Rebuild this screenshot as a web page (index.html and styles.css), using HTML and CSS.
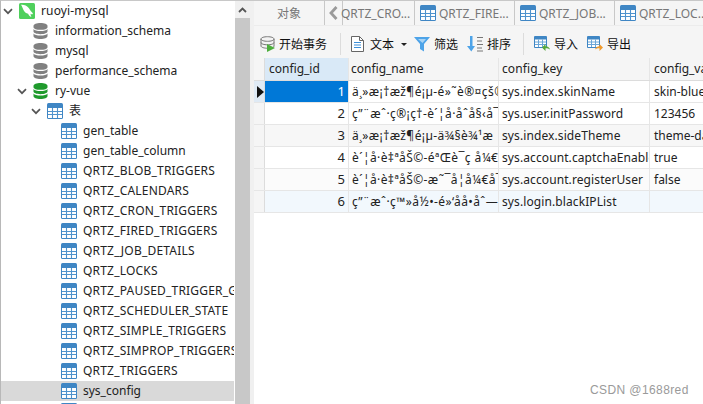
FILE: index.html
```html
<!DOCTYPE html>
<html lang="zh">
<head>
<meta charset="utf-8">
<title>ruoyi-mysql</title>
<link rel="stylesheet" href="styles.css">
</head>
<body>
<svg class="defs" width="0" height="0" aria-hidden="true">
  <symbol id="tbl" viewBox="0 0 16 16">
    <rect x="0" y="0" width="16" height="16" rx="1.5" fill="#3f86c4"/>
    <rect x="1" y="5" width="14" height="10" fill="#fff"/>
    <path d="M5.5 5v10M10.5 5v10M1 8.5h14M1 11.5h14" stroke="#4f93cd" stroke-width="1.1" fill="none"/>
  </symbol>
  <symbol id="db" viewBox="0 0 15 16">
    <path d="M0.5 3C0.5 1 3.5 0 7.5 0s7 1 7 3v1.2c0 1.6-3 2.6-7 2.6s-7-1-7-2.6z"/>
    <path d="M0.5 6c1 1.4 3.6 2 7 2s6-.6 7-2v2.6c0 1.5-3 2.6-7 2.6s-7-1.100-7-2.600z"/>
    <path d="M0.500 10.500c1 1.400 3.600 2 7 2s6-.6 7-2V13c0 1.800-3 3-7 3s-7-1.200-7-3z"/>
  </symbol>
  <symbol id="chev" viewBox="0 0 10 7">
    <path d="M1 1.200l4 4 4-4" fill="none" stroke="#555" stroke-width="1.700"/>
  </symbol>
</svg>
<div class="app">
  <nav class="tree">
    <div class="row l0"><span class="slot"><svg class="chev"><use href="#chev"/></svg></span>
      <svg class="conn" viewBox="0 0 16 16"><rect width="16" height="16" rx="1.500" fill="#4fd05c"/><path d="M2 1.800c3-.3 5.700.7 7.500 3 1.100 1.400 1.800 3 3.700 4.700.6.600 1 1.500.3 1.800-.7.100-1.400-.2-2-.6.100 1 .3 2 .9 3.200-1.600-.6-2.700-1.800-3.300-3.200-2-.5-3.800-1.900-4.600-3.800C3.800 5.600 3.100 3.600 2 1.800z" fill="#fff"/></svg>
      <span class="lbl up-s">ruoyi-mysql</span></div>
    <div class="row l1"><span class="slot"></span><svg class="dbi grey"><use href="#db"/></svg><span class="lbl">information_schema</span></div>
    <div class="row l1"><span class="slot"></span><svg class="dbi grey"><use href="#db"/></svg><span class="lbl">mysql</span></div>
    <div class="row l1"><span class="slot"></span><svg class="dbi grey"><use href="#db"/></svg><span class="lbl">performance_schema</span></div>
    <div class="row l1"><span class="slot"><svg class="chev"><use href="#chev"/></svg></span><svg class="dbi green"><use href="#db"/></svg><span class="lbl">ry-vue</span></div>
    <div class="row l2"><span class="slot"><svg class="chev"><use href="#chev"/></svg></span><svg class="ti"><use href="#tbl"/></svg><span class="lbl">表</span></div>
    <div class="row l3"><span class="slot"></span><svg class="ti"><use href="#tbl"/></svg><span class="lbl">gen_table</span></div>
    <div class="row l3"><span class="slot"></span><svg class="ti"><use href="#tbl"/></svg><span class="lbl">gen_table_column</span></div>
    <div class="row l3"><span class="slot"></span><svg class="ti"><use href="#tbl"/></svg><span class="lbl up">QRTZ_BLOB_TRIGGERS</span></div>
    <div class="row l3"><span class="slot"></span><svg class="ti"><use href="#tbl"/></svg><span class="lbl up">QRTZ_CALENDARS</span></div>
    <div class="row l3"><span class="slot"></span><svg class="ti"><use href="#tbl"/></svg><span class="lbl up">QRTZ_CRON_TRIGGERS</span></div>
    <div class="row l3"><span class="slot"></span><svg class="ti"><use href="#tbl"/></svg><span class="lbl up">QRTZ_FIRED_TRIGGERS</span></div>
    <div class="row l3"><span class="slot"></span><svg class="ti"><use href="#tbl"/></svg><span class="lbl up">QRTZ_JOB_DETAILS</span></div>
    <div class="row l3"><span class="slot"></span><svg class="ti"><use href="#tbl"/></svg><span class="lbl up">QRTZ_LOCKS</span></div>
    <div class="row l3"><span class="slot"></span><svg class="ti"><use href="#tbl"/></svg><span class="lbl up">QRTZ_PAUSED_TRIGGER_GRPS</span></div>
    <div class="row l3"><span class="slot"></span><svg class="ti"><use href="#tbl"/></svg><span class="lbl up">QRTZ_SCHEDULER_STATE</span></div>
    <div class="row l3"><span class="slot"></span><svg class="ti"><use href="#tbl"/></svg><span class="lbl up">QRTZ_SIMPLE_TRIGGERS</span></div>
    <div class="row l3"><span class="slot"></span><svg class="ti"><use href="#tbl"/></svg><span class="lbl up">QRTZ_SIMPROP_TRIGGERS</span></div>
    <div class="row l3"><span class="slot"></span><svg class="ti"><use href="#tbl"/></svg><span class="lbl up">QRTZ_TRIGGERS</span></div>
    <div class="row l3 sel"><span class="slot"></span><svg class="ti"><use href="#tbl"/></svg><span class="lbl">sys_config</span></div>
    <div class="row l3"><span class="slot"></span><svg class="ti"><use href="#tbl"/></svg><span class="lbl">sys_dept</span></div>
  </nav>
  <div class="vbar">
    <div class="vbtn"><svg width="9" height="6" viewBox="0 0 9 6"><path d="M1 5l3.500-3.500L8 5" fill="none" stroke="#555" stroke-width="1.800"/></svg></div>
    <div class="thumb"></div>
  </div>
  <main class="main">
    <div class="tabs">
      <div class="tab-obj">对象</div>
      <div class="tab-arrow"><svg width="9" height="14" viewBox="0 0 9 14"><path d="M7.500 1L2 7l5.500 6" fill="none" stroke="#9a9a9a" stroke-width="2.800"/></svg></div>
      <div class="tab first"><span class="tab-text shift">QRTZ_CRO...</span></div>
      <div class="tab"><svg class="ti"><use href="#tbl"/></svg><span class="tab-text">QRTZ_FIRE...</span></div>
      <div class="tab"><svg class="ti"><use href="#tbl"/></svg><span class="tab-text">QRTZ_JOB...</span></div>
      <div class="tab"><svg class="ti"><use href="#tbl"/></svg><span class="tab-text">QRTZ_LOC...</span></div>
    </div>
    <div class="toolbar">
      <div class="tool t-begin">
        <svg class="tic" viewBox="0 0 16 16"><path d="M1 3c0-1.400 3-2.300 6.500-2.300S14 1.600 14 3v7c0 1.400-2.500 2.300-6 2.300S1 11.400 1 10z" fill="#f3f3f3" stroke="#777"/><path d="M1 3c0 1.400 3 2.300 6.500 2.300S14 4.400 14 3M1 6.500c0 1.400 3 2.300 6.500 2.300S14 7.900 14 6.500" fill="none" stroke="#777"/><path d="M7 8l8 4-8 4z" fill="#4cae3c"/></svg>
        <span>开始事务</span>
      </div>
      <i class="sep"></i>
      <div class="tool t-text">
        <svg class="tic doc" viewBox="0 0 13 16"><path d="M.5.500h8l4 4v11H.500z" fill="#fff" stroke="#666"/><path d="M8.500.500v4h4" fill="none" stroke="#666"/><path d="M3 6.500h7M3 9h7M3 11.500h7" stroke="#3d8fd8"/></svg>
        <span>文本</span>
        <i class="caret"></i>
      </div>
      <div class="tool t-filter">
        <svg class="tic" viewBox="0 0 16 16"><path d="M0 1h16L10 8v7.500L6 13V8z" fill="#4da3e8"/><path d="M4 3h8L8.500 7z" fill="#a7d3f5"/></svg>
        <span>筛选</span>
      </div>
      <div class="tool t-sort">
        <svg class="tic" viewBox="0 0 16 16"><path d="M3 0h2.500v10H8l-3.700 5.500L0 10h3z" fill="#4da3e8"/><path d="M10 1.500h6M10 5h5M10 8.500h6M10 12h5M10 15h6" stroke="#777"/></svg>
        <span>排序</span>
      </div>
      <i class="sep s2"></i>
      <div class="tool t-imp">
        <svg class="tic" viewBox="0 0 16 16"><rect width="13" height="12" rx="1" fill="#3f86c4"/><rect x="1" y="3.500" width="11" height="7.500" fill="#fff"/><path d="M4.500 3.500V11M8.500 3.500V11M1 6h11M1 8.500h11" stroke="#6ba6d8"/><path d="M8 11.500L11.500 8v2.200c2.500 0 4 1.300 4.500 3.300-1.100-.9-2.500-1.200-4.500-1.200V15z" fill="#56a83a"/></svg>
        <span>导入</span>
      </div>
      <div class="tool t-exp">
        <svg class="tic" viewBox="0 0 16 16"><rect width="13" height="12" rx="1" fill="#3f86c4"/><rect x="1" y="3.500" width="11" height="7.500" fill="#fff"/><path d="M4.500 3.500V11M8.500 3.500V11M1 6h11M1 8.500h11" stroke="#6ba6d8"/><path d="M16 11.500L12.500 8v2.200c-2.500 0-4 1.300-4.500 3.300 1.100-.9 2.500-1.200 4.500-1.200V15z" fill="#ef9a2c"/></svg>
        <span>导出</span>
      </div>
    </div>
    <div class="grid">
      <div class="tr head"><div class="ind"></div><div class="td c1 hsel">config_id</div><div class="td c2">config_name</div><div class="td c3">config_key</div><div class="td c4">config_value</div></div>
      <div class="tr"><div class="ind cur"><i class="mark"></i></div><div class="td c1 num active">1</div><div class="td c2 moji">ä¸»æ¡†æž¶é¡µ-é»˜è®¤çš®è‚¤</div><div class="td c3">sys.index.skinName</div><div class="td c4">skin-blue</div></div>
      <div class="tr"><div class="ind"></div><div class="td c1 num">2</div><div class="td c2 moji">ç”¨æˆ·ç®¡ç†-è´¦å·åˆå§‹å¯†ç</div><div class="td c3">sys.user.initPassword</div><div class="td c4">123456</div></div>
      <div class="tr alt"><div class="ind"></div><div class="td c1 num">3</div><div class="td c2 moji">ä¸»æ¡†æž¶é¡µ-ä¾§è¾¹æ</div><div class="td c3">sys.index.sideTheme</div><div class="td c4">theme-dark</div></div>
      <div class="tr"><div class="ind"></div><div class="td c1 num">4</div><div class="td c2 moji">è´¦å·è‡ªåŠ©-éªŒè¯ç å¼€å…³</div><div class="td c3">sys.account.captchaEnabled</div><div class="td c4">true</div></div>
      <div class="tr soft"><div class="ind"></div><div class="td c1 num">5</div><div class="td c2 moji">è´¦å·è‡ªåŠ©-æ˜¯å¦å¼€å¯ç”¨æˆ·</div><div class="td c3">sys.account.registerUser</div><div class="td c4">false</div></div>
      <div class="tr hover"><div class="ind"></div><div class="td c1 num">6</div><div class="td c2 moji">ç”¨æˆ·ç™»å½•-é»‘åå•åˆ—è¡¨</div><div class="td c3">sys.login.blackIPList</div><div class="td c4"></div></div>
    </div>
  </main>
</div>
<div class="mark-wm">CSDN @1688red</div>
</body>
</html>
```
FILE: styles.css
```css
* { box-sizing: border-box; }
html, body { margin: 0; height: 100%; overflow: hidden; background: #fff; }
body { font-family: "Noto Sans", "Noto Sans CJK SC", sans-serif; font-size: 12px; color: #222; }
.defs { position: absolute; }
.app { display: flex; height: 404px; border-top: 1px solid #c8c8c8; border-left: 1px solid #b8b8b8; overflow: hidden; }

.tree { width: 234px; flex: none; overflow: hidden; padding-right: 1px; }
.row { display: flex; align-items: center; height: 20px; white-space: nowrap; overflow: hidden; }
.l0 { padding-left: 0; }
.l1 { padding-left: 14px; }
.l2 { padding-left: 28px; }
.l3 { padding-left: 42px; }
.sel { background: #d9d9d9; }
.lbl { margin-top: -2px; }
.up { letter-spacing: .2px; }
.up-s { letter-spacing: .15px; }
.slot { width: 14px; height: 20px; margin-right: 4px; flex: none; display: flex; align-items: center; justify-content: center; }
.chev { width: 10px; height: 7px; }
.conn, .ti { width: 16px; height: 16px; margin-right: 6px; flex: none; }
.dbi { width: 15px; height: 16px; margin-right: 7px; flex: none; }
.grey { fill: #808080; }
.green { fill: #1f9a2c; }

.vbar { width: 15px; flex: none; background: #c8c8c8; }
.vbtn { height: 17px; background: #f0f0f0; display: flex; align-items: center; justify-content: center; }
.thumb { height: 100%; }

.main { flex: 1; min-width: 0; border-left: 4px solid #f0f0f0; display: flex; flex-direction: column; }
.tabs { display: flex; height: 25px; background: #f5f5f5; overflow: hidden; flex: none; border-bottom: 1px solid #ececec; }
.tab-obj { width: 71px; flex: none; text-align: center; line-height: 25px; color: #777; border-right: 1px solid #c8c8c8; }
.tab-arrow { width: 18px; flex: none; display: flex; align-items: center; justify-content: center; border-right: 1px solid #c8c8c8; }
.tab { width: 100px; flex: none; display: flex; align-items: center; padding-left: 5px; border-right: 1px solid #c8c8c8; color: #777; }
.tab.first { width: 72px; padding-left: 0; }
.tab .ti { margin-right: 3px; }
.tab-text { white-space: nowrap; }
.shift { margin-left: -2px; }

.toolbar { display: flex; align-items: center; height: 32px; padding-top: 4px; background: #f5f5f5; flex: none; }
.tool { display: flex; align-items: center; color: #111; white-space: nowrap; }
.tic { width: 16px; height: 16px; margin-right: 4px; flex: none; }
.t-begin .tic { margin-right: 3px; }
.doc { width: 13px; margin-right: 6px; }
.sep { width: 1px; height: 22px; background: #dcdcdc; flex: none; }
.t-begin { margin-left: 6px; margin-right: 13px; }
.t-text { margin-left: 10px; }
.caret { width: 0; height: 0; border: 3px solid transparent; border-top: 3px solid #222; border-bottom: 0; margin-left: 7px; }
.t-filter { margin-left: 7px; }
.t-sort { margin-left: 9px; }
.s2 { margin-left: 12px; }
.t-imp { margin-left: 10px; }
.t-exp { margin-left: 9px; }

.grid { flex: 1; background: #fff; overflow: hidden; }
.tr { display: flex; height: 22px; background: #fff; border-bottom: 1px solid #e6e6e6; }
.head { height: 23px; background: #f5f5f5; border-bottom: 1px solid #dcdcdc; }
.alt { background: #f7f7f7; }
.soft { background: #fbfbfb; }
.hover { background: #f2f8fd; }
.ind { width: 11px; flex: none; background: #f5f5f5; border-right: 1px solid #dcdcdc; display: flex; align-items: center; }
.cur { background: #dfeaf5; }
.td { flex: none; padding: 0 3px; line-height: 21px; white-space: nowrap; overflow: hidden; border-right: 1px solid #e6e6e6; color: #222; }
.c1 { width: 84px; padding-left: 4px; }
.c2 { width: 150px; padding-left: 2px; }
.c3 { width: 151px; letter-spacing: .1px; }
.c4 { width: 90px; border-right: 0; padding-left: 4px; }
.moji { padding-left: 3px; letter-spacing: .4px; }
.num { text-align: right; padding-right: 3px; font-size: 13px; }
.hsel { background: #d9e9f7; }
.active { background: #0078d7; color: #fff; }
.mark { width: 0; height: 0; border-left: 7px solid #111; border-top: 6px solid transparent; border-bottom: 6px solid transparent; margin-left: 3px; }

.mark-wm { position: absolute; left: 590px; top: 383px; color: #9a9a9a; font: 12px "Liberation Sans", sans-serif; letter-spacing: .4px; }
```
